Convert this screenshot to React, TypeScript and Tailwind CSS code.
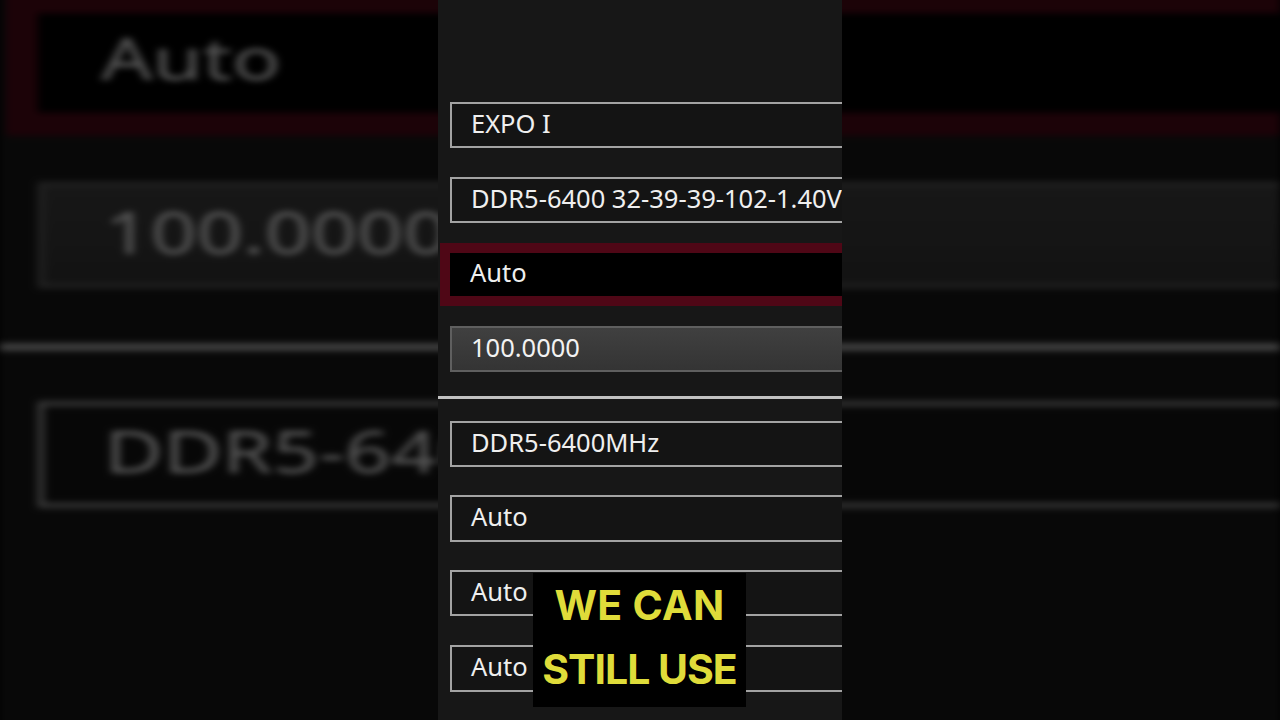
import React from "react";

const font = { fontFamily: '"Noto Sans", "Open Sans", sans-serif' };

function Field({ text, className = "" }: { text?: string; className?: string }) {
  return (
    <div
      className={`ml-[12px] flex w-[430px] shrink-0 items-center border-2 border-[#a3a3a3] bg-[#141414] pb-[3px] pl-[19px] ${className}`}
    >
      {text && <span className="whitespace-nowrap text-[25.5px] leading-none text-[#efefef]">{text}</span>}
    </div>
  );
}

function Panel({ full = true }: { full?: boolean }) {
  return (
    <div className="flex h-[720px] w-[404px] flex-col overflow-hidden bg-[#171717] pt-[102px]" style={font}>
      <Field text="EXPO I" className="h-[46px]" />
      <Field text="DDR5-6400 32-39-39-102-1.40V-1.35V" className="mt-[29px] h-[46px]" />

      {/* selected row */}
      <div className="ml-[2px] mt-[20px] h-[63px] w-[440px] shrink-0 border-[10px] border-[#4f0716] shadow-[inset_0_0_0_1px_#7a1a2e]">
        <div className="flex h-full items-center bg-black pb-[3px] pl-[20px]">
          <span className="text-[25.5px] leading-none text-[#efefef]">Auto</span>
        </div>
      </div>

      <div className="ml-[12px] mt-[20px] flex h-[46px] w-[430px] shrink-0 items-center border-2 border-[#5f5f5f] bg-gradient-to-b from-[#404040] to-[#343434] pb-[3px] pl-[19px]">
        <span className="text-[25.5px] leading-none text-[#f2f2f2]">100.0000</span>
      </div>

      <div className="mt-[24px] h-[3px] w-full shrink-0 bg-[#c2c2c2]" />

      <Field text="DDR5-6400MHz" className="mt-[22px] h-[46px]" />
      {full && (
        <>
          <Field text="Auto" className="mt-[28px] h-[47px]" />
          <Field text="Auto" className="mt-[28px] h-[46px]" />
          <Field text="Auto" className="mt-[29px] h-[47px]" />
        </>
      )}
    </div>
  );
}

export default function App() {
  return (
    <div className="relative h-[720px] w-[1280px] overflow-hidden bg-black">
      {/* blurred, stretched copy behind the video */}
      <div className="absolute left-[438px] top-0 h-[720px] w-[404px] origin-[202px_436px] scale-x-[3.17] scale-y-[2.31] blur-[1.4px] brightness-[0.36]">
        <Panel full={false} />
      </div>

      <div className="relative flex h-full justify-center">
        <Panel />
      </div>

      {/* caption */}
      <div
        className="absolute left-[533px] top-[573px] flex h-[134px] w-[213px] flex-col items-center justify-center bg-black pb-[7px] text-[41px] font-bold leading-[64px] text-[#dfdc3a]"
        style={{ fontFamily: 'Inter, "Open Sans", sans-serif' }}
      >
        <span className="tracking-[0.3px]">WE CAN</span>
        <span className="tracking-[-1px]">STILL USE</span>
      </div>
    </div>
  );
}
